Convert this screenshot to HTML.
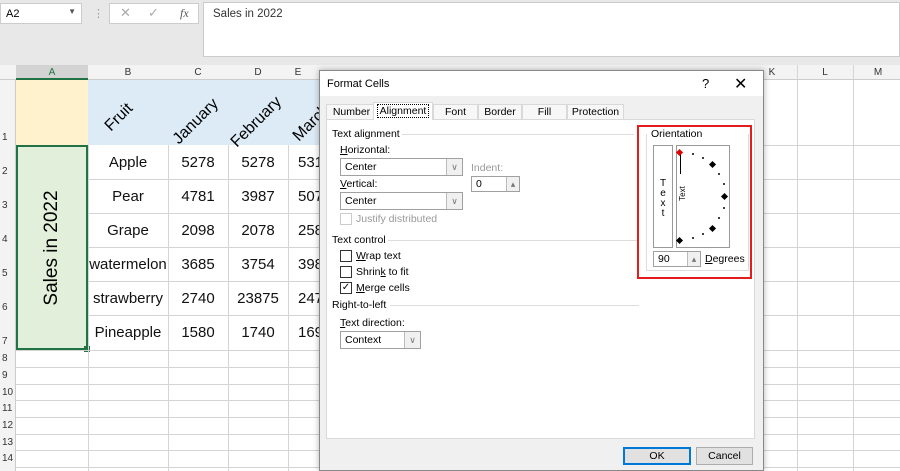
<!DOCTYPE html><html><head><style>
*{box-sizing:border-box;margin:0;padding:0}
body{width:900px;height:471px;overflow:hidden;background:#fff;font-family:"Liberation Sans",sans-serif;position:relative;font-size:11px}
.a{position:absolute}
.hl{position:absolute;background:#d4d4d4;height:1px}
.vl{position:absolute;background:#d4d4d4;width:1px}
.c{position:absolute;text-align:center;font-size:15px;color:#111}
.rh{position:absolute;left:0;width:16px;font-size:10px;color:#333;text-align:left;padding-left:2px}
.ch{position:absolute;top:65px;height:15px;font-size:10px;color:#333;text-align:center;line-height:15px}
.d{font-size:11px;color:#000}
.dd{position:absolute;background:#fff;border:1px solid #a0a0a0;font-size:10.5px;padding-left:4px;line-height:17px}
.dd b{position:absolute;right:0;top:0;width:16px;height:100%;border-left:1px solid #bbb;background:#f0f0f0;font-weight:normal;color:#777;text-align:center;font-size:9px}
.grp{position:absolute;font-size:10.5px;color:#000}
.sep{position:absolute;height:1px;background:#ddd}
.cb{position:absolute;width:12px;height:12px;border:1px solid #333;background:#fff}
.dot{position:absolute;background:#000;border-radius:50%}
</style></head><body>
<div class="a" style="left:0;top:0;width:900px;height:65px;background:#e8e8e8"></div>
<div class="a" style="left:0;top:3px;width:82px;height:21px;background:#fff;border:1px solid #ccc;font-size:11px;padding:4px 5px">A2<span style="position:absolute;right:5px;top:3px;font-size:8px;color:#555">▼</span></div>
<div class="a" style="left:93px;top:7px;color:#999">⋮</div>
<div class="a" style="left:109px;top:3px;width:90px;height:21px;background:#fff;border:1px solid #ccc;color:#aaa;font-size:13px"><span style="position:absolute;left:10px;top:1px">✕</span><span style="position:absolute;left:38px;top:1px">✓</span><span style="position:absolute;left:70px;top:2px;font-style:italic;color:#555;font-family:'Liberation Serif';font-size:12px">fx</span></div>
<div class="a" style="left:203px;top:2px;width:697px;height:55px;background:#fff;border:1px solid #ccc;font-size:11.5px;padding:5px 9px;color:#333">Sales in 2022</div>
<div class="a" style="left:0;top:65px;width:900px;height:15px;background:#f3f3f3;border-bottom:1px solid #ccc"></div>
<div class="a" style="left:0;top:80px;width:16px;height:391px;background:#f3f3f3;border-right:1px solid #ccc"></div>
<div class="a" style="left:16px;top:65px;width:72px;height:15px;background:#d3d3d3;border-bottom:2px solid #217346"></div>
<div class="ch" style="left:16px;width:72px;color:#217346">A</div>
<div class="ch" style="left:88px;width:80px">B</div><div class="ch" style="left:168px;width:60px">C</div><div class="ch" style="left:228px;width:60px">D</div><div class="ch" style="left:288px;width:20px">E</div>
<div class="ch" style="left:763px;width:18px">K</div><div class="ch" style="left:797px;width:56px">L</div><div class="ch" style="left:853px;width:50px">M</div>
<!-- grid -->
<div class="a" style="left:16px;top:80px;width:72px;height:65px;background:#fff2cc"></div>
<div class="a" style="left:88px;top:80px;width:232px;height:65px;background:#ddebf7"></div>
<div class="a" style="left:16px;top:145px;width:72px;height:205px;background:#e2efda;border:2px solid #217346"></div>
<div class="a" style="left:84px;top:346px;width:6px;height:6px;background:#217346"></div>
<div class="hl" style="left:88px;top:179px;width:812px"></div><div class="hl" style="left:88px;top:213px;width:812px"></div><div class="hl" style="left:88px;top:247px;width:812px"></div><div class="hl" style="left:88px;top:281px;width:812px"></div><div class="hl" style="left:88px;top:315px;width:812px"></div><div class="hl" style="left:16px;top:350px;width:884px"></div>
<div class="hl" style="left:16px;top:367px;width:884px"></div><div class="hl" style="left:16px;top:384px;width:884px"></div><div class="hl" style="left:16px;top:400px;width:884px"></div><div class="hl" style="left:16px;top:417px;width:884px"></div><div class="hl" style="left:16px;top:434px;width:884px"></div><div class="hl" style="left:16px;top:450px;width:884px"></div><div class="hl" style="left:16px;top:467px;width:884px"></div>
<div class="hl" style="left:763px;top:145px;width:137px"></div>
<div class="vl" style="left:88px;top:145px;height:326px"></div><div class="vl" style="left:168px;top:145px;height:326px"></div><div class="vl" style="left:228px;top:145px;height:326px"></div><div class="vl" style="left:288px;top:145px;height:326px"></div>
<div class="vl" style="left:797px;top:65px;height:406px"></div><div class="vl" style="left:853px;top:65px;height:406px"></div>
<div class="rh" style="top:132px">1</div><div class="rh" style="top:166px">2</div><div class="rh" style="top:200px">3</div><div class="rh" style="top:234px">4</div><div class="rh" style="top:268px">5</div><div class="rh" style="top:302px">6</div><div class="rh" style="top:336px">7</div>
<div class="rh" style="top:353px">8</div><div class="rh" style="top:370px">9</div><div class="rh" style="top:387px">10</div><div class="rh" style="top:403px">11</div><div class="rh" style="top:420px">12</div><div class="rh" style="top:437px">13</div><div class="rh" style="top:453px">14</div>
<div class="a" style="left:52px;top:248px;transform:translate(-50%,-50%) rotate(-90deg);font-size:19px;white-space:nowrap">Sales in 2022</div>
<div class="a" style="left:108px;top:120px;transform:rotate(-45deg);font-size:16px;transform-origin:left">Fruit</div>
<div class="a" style="left:176px;top:133px;transform:rotate(-45deg);font-size:16px;transform-origin:left">January</div>
<div class="a" style="left:234px;top:136px;transform:rotate(-45deg);font-size:16px;transform-origin:left">February</div>
<div class="a" style="left:296px;top:130px;transform:rotate(-45deg);font-size:16px;transform-origin:left">March</div>
<div class="c" style="left:88px;width:80px;top:154px">Apple</div><div class="c" style="left:168px;width:60px;top:154px">5278</div><div class="c" style="left:228px;width:60px;top:154px">5278</div><div class="c" style="left:298px;top:154px">5312</div>
<div class="c" style="left:88px;width:80px;top:188px">Pear</div><div class="c" style="left:168px;width:60px;top:188px">4781</div><div class="c" style="left:228px;width:60px;top:188px">3987</div><div class="c" style="left:298px;top:188px">5071</div>
<div class="c" style="left:88px;width:80px;top:222px">Grape</div><div class="c" style="left:168px;width:60px;top:222px">2098</div><div class="c" style="left:228px;width:60px;top:222px">2078</div><div class="c" style="left:298px;top:222px">2581</div>
<div class="c" style="left:88px;width:80px;top:256px">watermelon</div><div class="c" style="left:168px;width:60px;top:256px">3685</div><div class="c" style="left:228px;width:60px;top:256px">3754</div><div class="c" style="left:298px;top:256px">3981</div>
<div class="c" style="left:88px;width:80px;top:290px">strawberry</div><div class="c" style="left:168px;width:60px;top:290px">2740</div><div class="c" style="left:228px;width:60px;top:290px">23875</div><div class="c" style="left:298px;top:290px">2471</div>
<div class="c" style="left:88px;width:80px;top:324px">Pineapple</div><div class="c" style="left:168px;width:60px;top:324px">1580</div><div class="c" style="left:228px;width:60px;top:324px">1740</div><div class="c" style="left:298px;top:324px">1691</div>
<!-- dialog -->
<div class="a" style="left:319px;top:70px;width:445px;height:401px;background:#f0f0f0;border:1px solid #888;box-shadow:0 0 6px rgba(0,0,0,.3)">
<div class="a" style="left:0;top:0;width:443px;height:25px;background:#fff"></div>
<div class="a d" style="left:7px;top:7px">Format Cells</div>
<div class="a" style="left:382px;top:5px;font-size:13px">?</div>
<div class="a" style="left:414px;top:3px;font-size:16px">✕</div>
<div class="a" style="left:6px;top:48px;width:429px;height:320px;background:#fff;border:1px solid #d9d9d9"></div>
<div class="a d" style="left:6px;top:33px;width:51px;height:16px;border:1px solid #d9d9d9;background:#f7f7f7;text-align:center;line-height:14px;font-size:10.5px">Number</div>
<div class="a d" style="left:53px;top:31px;width:60px;height:18px;border:1px solid #d9d9d9;border-bottom:none;background:#fff;text-align:center;line-height:16px;font-size:10.5px"><span style="border:1px dotted #000;padding:0 2px">Alignment</span></div>
<div class="a d" style="left:113px;top:33px;width:45px;height:16px;border:1px solid #d9d9d9;background:#f7f7f7;text-align:center;line-height:14px;font-size:10.5px">Font</div>
<div class="a d" style="left:158px;top:33px;width:44px;height:16px;border:1px solid #d9d9d9;background:#f7f7f7;text-align:center;line-height:14px;font-size:10.5px">Border</div>
<div class="a d" style="left:202px;top:33px;width:45px;height:16px;border:1px solid #d9d9d9;background:#f7f7f7;text-align:center;line-height:14px;font-size:10.5px">Fill</div>
<div class="a d" style="left:247px;top:33px;width:57px;height:16px;border:1px solid #d9d9d9;background:#f7f7f7;text-align:center;line-height:14px;font-size:10.5px">Protection</div>
<div class="grp" style="left:12px;top:57px">Text alignment</div><div class="sep" style="left:82px;top:63px;width:232px"></div>
<div class="grp" style="left:20px;top:73px"><u>H</u>orizontal:</div>
<div class="dd" style="left:20px;top:87px;width:123px;height:18px">Center<b>∨</b></div>
<div class="grp" style="left:151px;top:91px;color:#999">Indent:</div>
<div class="dd" style="left:151px;top:105px;width:49px;height:16px;line-height:15px">0<b style="width:13px">▴<br></b></div>
<div class="grp" style="left:20px;top:107px"><u>V</u>ertical:</div>
<div class="dd" style="left:20px;top:121px;width:123px;height:18px">Center<b>∨</b></div>
<div class="cb" style="left:20px;top:142px;border-color:#ccc"></div><div class="grp" style="left:36px;top:142px;color:#999">Justify distributed</div>
<div class="grp" style="left:12px;top:163px">Text control</div><div class="sep" style="left:68px;top:169px;width:251px"></div>
<div class="cb" style="left:20px;top:179px"></div><div class="grp" style="left:36px;top:179px"><u>W</u>rap text</div>
<div class="cb" style="left:20px;top:195px"></div><div class="grp" style="left:36px;top:195px">Shrin<u>k</u> to fit</div>
<div class="cb" style="left:20px;top:211px;font-size:10px;line-height:10px;text-align:center">✓</div><div class="grp" style="left:36px;top:211px"><u>M</u>erge cells</div>
<div class="grp" style="left:12px;top:228px">Right-to-left</div><div class="sep" style="left:70px;top:234px;width:249px"></div>
<div class="grp" style="left:20px;top:246px"><u>T</u>ext direction:</div>
<div class="dd" style="left:20px;top:260px;width:81px;height:18px">Context<b>∨</b></div>
<div class="a" style="left:317px;top:54px;width:115px;height:154px;border:2px solid #e51c1c"></div>
<div class="grp" style="left:331px;top:57px">Orientation</div>
<div class="a" style="left:326px;top:63px;width:103px;height:137px;border:1px solid #ddd;border-top:none"></div>
<div class="a" style="left:333px;top:74px;width:20px;height:103px;border:1px solid #999;background:#fff;font-size:10px;text-align:center;line-height:10px;padding-top:33px">T<br>e<br>x<br>t</div>
<div class="a" style="left:356px;top:74px;width:54px;height:103px;border:1px solid #999;background:#fff"></div>
<div class="a" style="left:360px;top:81px;width:1px;height:22px;background:#000"></div>
<div class="a" style="left:355px;top:118px;transform:rotate(-90deg);font-size:8px">Text</div>
<div class="a" style="left:357px;top:79px;width:5px;height:5px;background:#d00;transform:rotate(45deg)"></div>
<div class="a" style="left:357px;top:167px;width:5px;height:5px;background:#000;transform:rotate(45deg)"></div>
<div class="a" style="left:390px;top:91px;width:5px;height:5px;background:#000;transform:rotate(45deg)"></div>
<div class="a" style="left:402px;top:123px;width:5px;height:5px;background:#000;transform:rotate(45deg)"></div>
<div class="a" style="left:390px;top:155px;width:5px;height:5px;background:#000;transform:rotate(45deg)"></div>
<div class="dot" style="left:372px;top:82px;width:2px;height:2px"></div><div class="dot" style="left:382px;top:86px;width:2px;height:2px"></div><div class="dot" style="left:398px;top:102px;width:2px;height:2px"></div><div class="dot" style="left:403px;top:112px;width:2px;height:2px"></div><div class="dot" style="left:403px;top:136px;width:2px;height:2px"></div><div class="dot" style="left:398px;top:146px;width:2px;height:2px"></div><div class="dot" style="left:382px;top:162px;width:2px;height:2px"></div><div class="dot" style="left:372px;top:166px;width:2px;height:2px"></div>
<div class="dd" style="left:333px;top:180px;width:48px;height:16px;line-height:15px">90<b style="width:13px">▴</b></div>
<div class="grp" style="left:385px;top:182px"><u>D</u>egrees</div>
<div class="a d" style="left:303px;top:376px;width:68px;height:18px;border:2px solid #0078d7;background:#e1e1e1;text-align:center;line-height:14px;font-size:10.5px">OK</div>
<div class="a d" style="left:376px;top:376px;width:57px;height:18px;border:1px solid #adadad;background:#e1e1e1;text-align:center;line-height:16px;font-size:10.5px">Cancel</div>
</div>
</body></html>
